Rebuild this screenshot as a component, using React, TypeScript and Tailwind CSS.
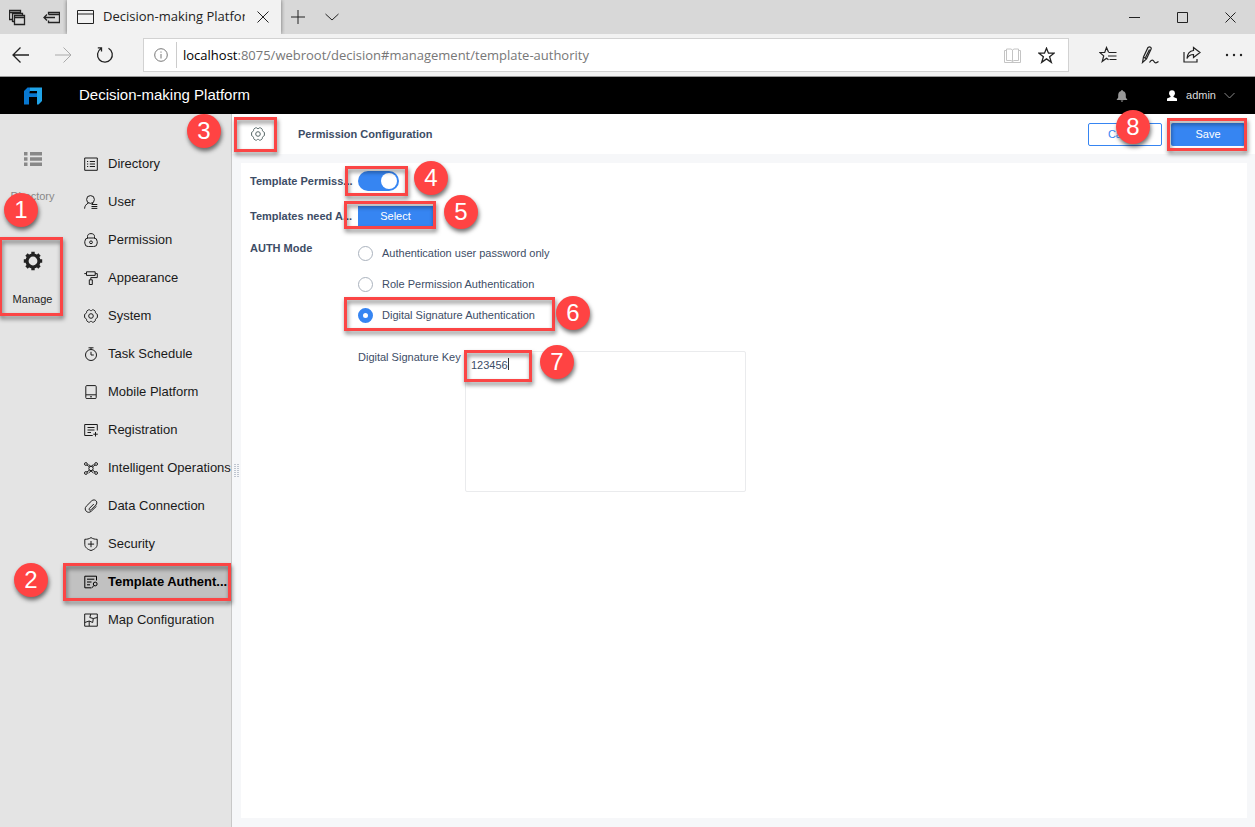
import type { ReactNode } from 'react'
import { useState } from 'react'

interface MenuItem {
    label: string;
    icon: ReactNode;
}

const gearPath = 'M4.300 1c.8-.5 1.400-.2 1.800.3.600.5 1.200.5 1.800 0 .4-.5 1-.8 1.800-.3l1.200.8c.5.4.5 1 .5 1.600s.4 1 1 1.200c.7.2 1 .7 1 1.300v2.200c0 .6-.3 1.100-1 1.300-.6.2-1 .6-1 1.200s0 1.200-.5 1.600L9.700 13c-.8.5-1.400.2-1.800-.3-.6-.5-1.200-.5-1.800 0-.4.5-1 .8-1.800.3l-1.200-.8c-.5-.4-.5-1-.5-1.600s-.4-1-1-1.200c-.7-.2-1-.7-1-1.300V5.900c0-.6.3-1.100 1-1.300.6-.2 1-.6 1-1.200s0-1.200.5-1.600z'

const menuItems: MenuItem[] = [
    { label: 'Directory', icon: <><path d="M.7 1h12.600v12.300H.7z" /><path d="M3 4.500h1.200M3 7h1.200M3 9.500h1.200M5.800 4.500H11M5.800 7H11M5.800 9.500H11" /></> },
    { label: 'User', icon: <><circle cx="6.500" cy="4.500" r="3.900" /><path d="M.6 13.700c0-2.700 1.600-4.700 3.900-5.700M8 8.300l1.200.5M7.500 9.500H13.300M7.500 11.500H13.300M7.500 13.400H13.300" /></> },
    { label: 'Permission', icon: <><rect x=".8" y="5" width="12.400" height="8.600" rx="3.500" /><path d="M3.500 5V3.500C3.500 1.500 5 .6 7 .6s3.500.9 3.500 2.900V5" /><circle cx="7" cy="9.300" r="1.400" /></> },
    { label: 'Appearance', icon: <><path d="M2.500.8h8.700v3.600H2.500zM.3 2.600h2.200M11.200 2.600h2.100v4H6.800v2" /><path d="M5.300 8.800h3v4.700h-3z" /></> },
    { label: 'System', icon: <><path d={gearPath} /><circle cx="7" cy="7" r="2.300" /></> },
    { label: 'Task Schedule', icon: <><circle cx="7" cy="8" r="5.500" /><path d="M7 4.800V8h2.800M4.500.8h5M7 .8v1.700" /></> },
    { label: 'Mobile Platform', icon: <><rect x="1.800" y=".6" width="10.400" height="13" rx="1" /><path d="M2 9.800h10M6 11.800h2" /></> },
    { label: 'Registration', icon: <><path d="M13.300 7.500V1.500H.7v11h8M3.500 4.500h7M3.500 7h7M3.500 9.500h3.500M11.500 9v4.500M9.300 11.200h4.500" /></> },
    { label: 'Intelligent Operations', icon: <><circle cx="7" cy="7.500" r="2.200" /><circle cx="1.900" cy="3" r="1.400" /><circle cx="12.100" cy="3" r="1.400" /><circle cx="1.900" cy="12" r="1.400" /><circle cx="12.100" cy="12" r="1.400" /><path d="m3 4 2.500 2M11 4 8.500 6M3 11l2.500-2M11 11 8.500 9M4.500 3.500 7 5.500l2.500-2M4.500 12 7 10l2.500 2" /></> },
    { label: 'Data Connection', icon: <path d="m9.800 5-4.300 4.300c-1.300 1.300.4 2.600 1.500 1.500l4.800-4.800c3-3.200-1.300-7-4.300-4L2.300 7.200c-3.300 3.500 1.500 8.300 5 5l5.200-5" /> },
    { label: 'Security', icon: <><path d="M7 .6c2 1.300 3.800 1.700 6.200 1.700v5.200c0 2.800-2.800 5-6.200 6-3.400-1-6.200-3.200-6.200-6V2.300C3.200 2.300 5 1.900 7 .6z" /><path d="M7 4v6.200M3.900 7.100h6.200" /></> },
    { label: 'Template Authent...', icon: <><path d="M12.500 5.500V1.200H.8v11.600H7M3 4.200h7.300M3 7h4.500M3 9.800h3" /><circle cx="11.200" cy="9" r="1.900" /><path d="m9.900 10.500-2.500 2.800" /></> },
    { label: 'Map Configuration', icon: <path d="M.7 1h12.600v12.200H.7zM.7 9.500l4.500-1.500 3.500 1.500M5.200 13V8M6.800 1 5.800 4.500l3.500 1-.6 4M9.300 5.500l4-1" /> },
]

const authModes = [
    'Authentication user password only',
    'Role Permission Authentication',
    'Digital Signature Authentication',
]

function Icon({ size = 14, box = 14, className = '', children }: { size?: number; box?: number; className?: string; children: ReactNode }) {
    return (
        <svg width={size} height={size} viewBox={`0 0 ${box} ${box}`} fill="none" stroke="currentColor" className={`shrink-0 ${className}`} aria-hidden="true">
            {children}
        </svg>
    )
}

// Red outline around a highlighted control, laid over it
function Frame({ className }: { className: string }) {
    return <span className={`absolute z-10 border-3 border-[#fb4545] pointer-events-none drop-shadow-[1px_3px_2px_rgba(0,0,0,0.5)] ${className}`} />
}

function Badge({ step, className }: { step: number; className: string }) {
    return (
        <span className={`absolute z-20 flex size-[34px] items-center justify-center rounded-full bg-[#ff4343] text-2xl font-normal text-white pointer-events-none shadow-[1px_3px_4px_rgba(0,0,0,0.55)] ${className}`}>
            {step}
        </span>
    )
}

function BrowserBar() {
    return (
        <div className="font-['Open_Sans',sans-serif] text-[#222]">
            <div className="flex h-[34px] items-center bg-[#d8d8d8]">
                <div className="flex w-[67px] items-center gap-[17px] pl-[9px]">
                    <button aria-label="Tabs set aside">
                        <Icon size={17} box={17} className="stroke-[1.3]"><path d="M3.500 10.500H.5v-9h11v3M.5 3.500h11M5.500 6.500h10v9h-10zM5.500 8.500h10M3.500 13V4.500h10v2M3.500 12.500h2" /></Icon>
                    </button>
                    <button aria-label="Set tabs aside">
                        <Icon size={17} box={17} className="stroke-[1.3]"><path d="M5.500 5.500v-2h11v10h-11v-2M5.500 5.500h11M12 8.500H.8M4 5.500l-3 3 3 3" /></Icon>
                    </button>
                </div>
                <div className="flex h-full w-[214px] items-center bg-[#f2f2f2] pl-[10px] pr-3 shadow-[0_0_4px_rgba(0,0,0,0.5)] [clip-path:inset(0_-4px_0_-4px)]">
                    <Icon size={17} box={17}><path d="M.5 1.500h16v13H.5zM.5 5h16" /></Icon>
                    <span className="ml-[9px] w-[142px] overflow-hidden whitespace-nowrap text-[13px]">Decision-making Platform</span>
                    <button className="ml-auto" aria-label="Close tab">
                        <Icon size={12} box={12}><path d="m.5.5 11 11M11.500.5l-11 11" /></Icon>
                    </button>
                </div>
                <div className="flex items-center gap-5 pl-[10px]">
                    <button aria-label="New tab"><Icon><path d="M7 0v14M0 7h14" /></Icon></button>
                    <button aria-label="Tab list"><Icon><path d="m.5 4 6.500 6 6.500-6" /></Icon></button>
                </div>
                <div className="ml-auto flex items-center gap-[37px] pr-[19px]">
                    <button aria-label="Minimize"><Icon size={11} box={11}><path d="M0 5.500h11" /></Icon></button>
                    <button aria-label="Maximize"><Icon size={11} box={11}><path d="M.5.5h10v10H.5z" /></Icon></button>
                    <button aria-label="Close"><Icon size={11} box={11}><path d="m.5.5 10 10M10.500.5l-10 10" /></Icon></button>
                </div>
            </div>
            <div className="flex h-[43px] items-center border-b border-[#999] bg-[#f2f2f2] pl-3">
                <button aria-label="Back"><Icon size={18} box={18} className="stroke-[1.3]"><path d="M17 9H1M8.500 1.500 1 9l7.500 7.500" /></Icon></button>
                <button className="ml-6 text-[#aaa]" aria-label="Forward"><Icon size={18} box={18}><path d="M1 9h16M9.500 1.500 17 9l-7.500 7.500" /></Icon></button>
                <button className="ml-6" aria-label="Refresh"><Icon size={18} box={18} className="stroke-[1.3]"><path d="M12.500 2.300A7.400 7.400 0 1 1 5 2.500M1.800 1.800H5.500v3.800" /></Icon></button>
                <div className="ml-[29px] flex h-[34px] flex-1 items-center border border-[#d2d2d2] bg-white">
                    <Icon className="ml-[10px] mr-2 text-[#777]"><circle cx="7" cy="7" r="6.300" /><path d="M7 6v4.500M7 3.500v1.200" /></Icon>
                    <div className="h-[26px] border-l border-[#ccc]" />
                    <span className="ml-[6px] pt-0.5 text-[13px] text-[#777]"><span className="text-black">localhost</span>:8075/webroot/decision#management/template-authority</span>
                    <div className="ml-auto flex items-center gap-[17px] pr-[13px]">
                        <button className="text-[#c4c4c4]" aria-label="Reading view"><Icon size={17} box={17}><path d="M8.500 3v11.500M2.500 2h4.500l1.500 1L10 2h4.500v11.500H10l-1.500 1-1.500-1H2.500zM2.500 3.500h-2v12h16v-12h-2" /></Icon></button>
                        <button aria-label="Add to favorites"><Icon size={17} box={17} className="stroke-[1.3]"><path d="m8.500 1.200 2 5h5.600l-4.500 3.500 1.700 5.600-4.800-3.400-4.800 3.400 1.700-5.600L.9 6.200h5.600z" /></Icon></button>
                    </div>
                </div>
                <div className="flex items-center gap-6 pl-[30px] pr-3">
                    <button aria-label="Favorites"><Icon size={18} box={18} className="stroke-[1.200]"><path d="M9.500 6 7.500 1.500 5.700 6.500H.8l3.900 3.400-1.500 5.600 4.300-3.200 2 1.500M9.500 6.500h8M9 10h8.500M10.500 13.500h7" /></Icon></button>
                    <button aria-label="Add notes"><Icon size={18} box={18} className="stroke-[1.200]"><path d="M1.500 16.500 2.500 11 7 1.500c2-1.500 3.800 0 3 1.800L5.500 13zM2.500 11l3 2M8.500 3.500l-4 8M8.500 16.500c2-3 3.500-3 4.500-1s2.500 1.500 4.500 0" /></Icon></button>
                    <button aria-label="Share"><Icon size={18} box={18} className="stroke-[1.200]"><path d="M1 6v10h13v-3M10.500 1.500l6.500 5-6.500 5v-3c-3 0-5 1-6.500 4 .3-4.500 2.500-7.500 6.500-8z" /></Icon></button>
                    <button aria-label="More"><Icon size={18} box={18} className="fill-current stroke-none"><circle cx="2" cy="9" r="1.200" /><circle cx="9" cy="9" r="1.200" /><circle cx="16" cy="9" r="1.200" /></Icon></button>
                </div>
            </div>
        </div>
    )
}

function AppHeader() {
    return (
        <header className="flex h-[37px] items-center bg-black pl-6 pr-5 text-white">
            <svg width="18" height="18" viewBox="0 0 18 18" aria-hidden="true">
                <path d="M3.500.5H6V6h7v4H5v7.500H0V4z" fill="#0878d1" />
                <path d="M6 .5h12V14l-3.500 3.500H13V4H6z" fill="#20a4e8" />
                <path d="M5.500 4.500H13v1.800H5.500z" fill="#000" />
            </svg>
            <h1 className="ml-[37px] text-[15px]">Decision-making Platform</h1>
            <button className="ml-auto text-[#999]" aria-label="Notifications">
                <Icon size={12} box={12} className="fill-current stroke-none"><path d="M5.300 0h1.400v1C9 1.500 9.800 3.200 9.800 5v2.500L11.500 10H.5l1.700-2.500V5c0-1.800.8-3.500 3.100-4zM4.500 10.500h3L6 12z" /></Icon>
            </button>
            <button className="ml-[38px] flex items-center text-[11px] text-[#ddd]">
                <Icon size={12} box={12} className="fill-white stroke-none"><circle cx="6" cy="3.200" r="2.900" /><path d="M4.500 5h3v2l3.500 1.500V11H1V8.500L4.500 7z" /></Icon>
                <span className="ml-2">admin</span>
                <Icon size={11} box={11} className="ml-2 text-[#888]"><path d="m.5 3 5 5 5-5" /></Icon>
            </button>
        </header>
    )
}

function Sidebar() {
    return (
        <div className="flex w-[232px] shrink-0 border-r border-[#c8c8c8] bg-[#e4e4e4]">
            <nav className="w-[65px] text-[11px]">
                <a href="#directory" className="relative flex h-[123px] flex-col items-center pt-9 text-[#888]">
                    <Icon size={18} box={18} className="fill-current stroke-none">
                        <path d="M0 2h3.500v3.500H0zM6 2h12v3.500H6zM0 7.200h3.500v3.500H0zM6 7.200h12v3.500H6zM0 12.500h3.500V16H0zM6 12.500h12V16H6z" />
                    </Icon>
                    <span className="mt-5">Directory</span>
                    <Badge step={1} className="left-1 top-[79px]" />
                </a>
                <a href="#management" className="relative flex h-20 flex-col items-center pt-[14px] text-[#222]">
                    <svg width="20" height="20" viewBox="0 0 20 20" aria-hidden="true" fill="none" stroke="#222">
                        <circle cx="10" cy="10" r="6" strokeWidth="3.200" />
                        <path d="M10 .8v3M10 16.200v3M.8 10h3M16.200 10h3M3.500 3.500l2 2M14.500 14.500l2 2M16.500 3.500l-2 2M5.500 14.500l-2 2" strokeWidth="3.400" />
                    </svg>
                    <span className="mt-5">Manage</span>
                    <Frame className="-left-px top-0 h-[79px] w-16" />
                </a>
            </nav>
            <nav className="min-w-0 flex-1 pt-[31px] text-[13px] text-[#1a1a1a]">
                {menuItems.map((item) => {
                    const active = item.label.startsWith('Template')
                    return (
                        <a
                            key={item.label}
                            href="#menu"
                            className={`relative flex h-[38px] items-center gap-[10px] whitespace-nowrap pl-[19px] ${active ? 'bg-[#c1c1c1] font-bold text-black' : ''}`}
                        >
                            <Icon>{item.icon}</Icon>
                            {item.label}
                            {active && <Frame className="-left-0.5 right-0 inset-y-0" />}
                            {active && <Badge step={2} className="-left-[51px] top-0" />}
                        </a>
                    )
                })}
            </nav>
        </div>
    )
}

function Toolbar() {
    return (
        <div className="relative flex h-10 items-center bg-white pr-[10px]">
            <Badge step={3} className="-left-[45px] top-0" />
            <button className="relative ml-[19px] text-[#566]" aria-label="Settings">
                <Icon><path d={gearPath} /><circle cx="7" cy="7" r="2.300" /></Icon>
                <Frame className="-left-[17px] -top-[10px] h-[35px] w-[43px]" />
            </button>
            <h2 className="ml-[33px] text-[11px] font-bold">Permission Configuration</h2>
            <div className="relative ml-auto">
                <button className="block h-[23px] w-[74px] rounded-xs border border-[#3685f2] text-[#3685f2]">Cancel</button>
                <Badge step={8} className="left-7 -top-[13px]" />
            </div>
            <div className="relative ml-[9px]">
                <button className="block h-[23px] w-[74px] rounded-xs bg-[#3685f2] text-white">Save</button>
                <Frame className="-left-1 -right-0.5 -inset-y-[5px]" />
            </div>
        </div>
    )
}

function PermissionForm() {
    const [enabled, setEnabled] = useState(true)
    const [mode, setMode] = useState(authModes[2])
    const [signatureKey, setSignatureKey] = useState('123456')

    return (
        <form className="flex-1 bg-white pl-[9px] pt-2">
            <div className="flex items-center">
                <label htmlFor="template-permission" className="w-[108px] whitespace-nowrap font-bold">Template Permiss...</label>
                <div className="relative">
                    <input
                        id="template-permission"
                        type="checkbox"
                        role="switch"
                        checked={enabled}
                        onChange={(e) => setEnabled(e.target.checked)}
                        className="flex h-5 w-[41px] appearance-none items-center rounded-full bg-[#ccc] px-0.5 before:size-4 before:rounded-full before:bg-white checked:justify-end checked:bg-[#3685f2]"
                    />
                    <Frame className="-left-[13px] -top-[5px] h-[30px] w-[63px]" />
                    <Badge step={4} className="left-14 -top-[10px]" />
                </div>
            </div>
            <div className="mt-[15px] flex items-center">
                <label htmlFor="select-templates" className="w-[108px] whitespace-nowrap font-bold">Templates need A...</label>
                <div className="relative">
                    <button id="select-templates" type="button" className="block h-[21px] w-[75px] bg-[#3685f2] text-white">Select</button>
                    <Frame className="-left-[14px] -top-[5px] h-[28px] w-[92px]" />
                    <Badge step={5} className="left-[86px] -top-[11px]" />
                </div>
            </div>
            <fieldset className="mt-[11px] flex">
                <legend className="float-left w-[108px] pt-0.5 font-bold">AUTH Mode</legend>
                <div>
                    {authModes.map((name) => (
                        <label key={name} className="relative flex h-[31px] items-center gap-[9px]">
                            <input
                                type="radio"
                                name="auth-mode"
                                checked={mode === name}
                                onChange={() => setMode(name)}
                                className="size-[15px] appearance-none rounded-full border border-[#aab2bd] bg-white checked:border-5 checked:border-[#3685f2]"
                            />
                            {name}
                            {name === authModes[2] && <Frame className="-left-[14px] -top-[3px] h-[34px] w-[211px]" />}
                            {name === authModes[2] && <Badge step={6} className="left-[198px] -top-[4px]" />}
                        </label>
                    ))}
                </div>
            </fieldset>
            <div className="mt-5 flex pl-[108px]">
                <label htmlFor="signature-key" className="w-[107px] whitespace-nowrap leading-3">Digital Signature Key</label>
                <div className="relative">
                    <textarea
                        id="signature-key"
                        value={signatureKey}
                        onChange={(e) => setSignatureKey(e.target.value)}
                        className="block h-[141px] w-[281px] resize-none rounded-xs border border-[#eaebed] px-[5px] py-[5px] outline-none"
                    />
                    <span className="absolute left-[43px] top-[7px] h-3 border-l border-[#333]" />
                    <Frame className="-left-px -top-px h-[32px] w-[68px]" />
                    <Badge step={7} className="left-[75px] -top-[6px]" />
                </div>
            </div>
        </form>
    )
}

export default function App() {
    return (
        <div className="flex min-h-screen flex-col font-['Liberation_Sans',sans-serif]">
            <BrowserBar />
            <AppHeader />
            <div className="flex flex-1">
                <Sidebar />
                <main className="relative flex min-w-0 flex-1 flex-col bg-[#f6f7f9] text-[11px] text-[#3d4d66]">
                    <Toolbar />
                    <div className="flex flex-1 py-[9px] pl-[9px] pr-2">
                        <PermissionForm />
                    </div>
                    <svg width="5" height="13" viewBox="0 0 5 13" className="absolute left-0.5 top-[350px]" aria-hidden="true">
                        <path d="M1 0v13M4 0v13" stroke="#8a94a6" strokeDasharray="1 1" />
                    </svg>
                </main>
            </div>
        </div>
    )
}
